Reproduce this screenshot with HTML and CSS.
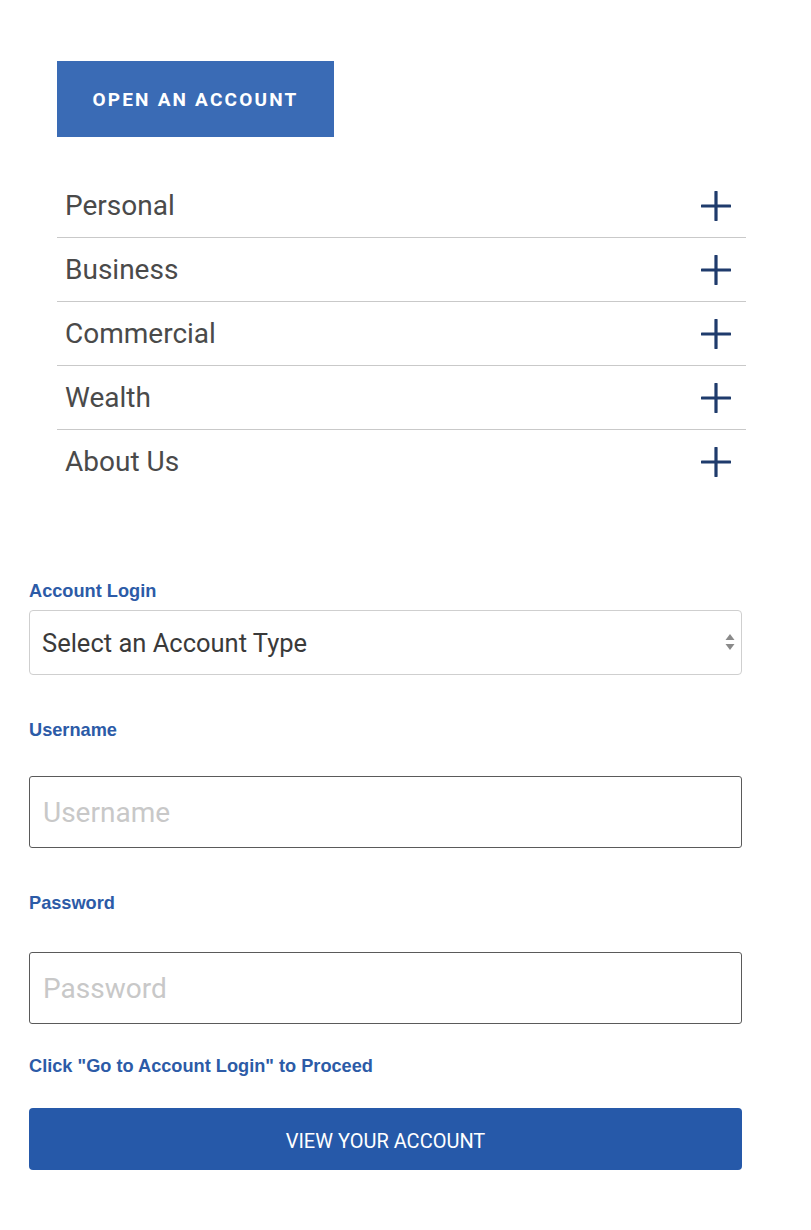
FILE: index.html
```html
<!DOCTYPE html>
<html lang="en">
<head>
<meta charset="utf-8">
<title>Account</title>
<link rel="stylesheet" href="styles.css">
</head>
<body>
<div class="page">
  <a class="open-btn" href="#">OPEN AN ACCOUNT</a>

  <ul class="nav">
    <li class="nav-item"><span>Personal</span><svg class="plus" viewBox="0 0 30 30"><path d="M15 1V29M1 15H29"/></svg></li>
    <li class="nav-item"><span>Business</span><svg class="plus" viewBox="0 0 30 30"><path d="M15 1V29M1 15H29"/></svg></li>
    <li class="nav-item"><span>Commercial</span><svg class="plus" viewBox="0 0 30 30"><path d="M15 1V29M1 15H29"/></svg></li>
    <li class="nav-item"><span>Wealth</span><svg class="plus" viewBox="0 0 30 30"><path d="M15 1V29M1 15H29"/></svg></li>
    <li class="nav-item"><span>About Us</span><svg class="plus" viewBox="0 0 30 30"><path d="M15 1V29M1 15H29"/></svg></li>
  </ul>

  <form class="login">
    <label class="lbl lbl-account">Account Login</label>
    <div class="select-wrap">
      <select class="select">
        <option>Select an Account Type</option>
      </select>
      <svg class="arrows" viewBox="0 0 10 20"><path d="M5 2L9.5 8H0.5Z"/><path d="M5 18L9.5 12H0.5Z"/></svg>
    </div>

    <label class="lbl lbl-user">Username</label>
    <input class="field field-user" type="text" placeholder="Username">

    <label class="lbl lbl-pass">Password</label>
    <input class="field field-pass" type="password" placeholder="Password">

    <p class="lbl lbl-click">Click "Go to Account Login" to Proceed</p>
    <button class="view-btn" type="button">VIEW YOUR ACCOUNT</button>
  </form>
</div>
</body>
</html>
```
FILE: styles.css
```css
* { box-sizing: border-box; }
html, body { margin: 0; padding: 0; background: #fff; }
body { font-family: Roboto, "Liberation Sans", Arial, sans-serif; }

.page { padding-top: 61px; }

.open-btn {
  display: flex;
  align-items: center;
  justify-content: center;
  margin-left: 57px;
  width: 277px;
  height: 76px;
  background: #3a6bb5;
  color: #fff;
  font-weight: 700;
  font-size: 19px;
  letter-spacing: 2.2px;
  text-decoration: none;
}

.nav {
  list-style: none;
  margin: 37px 0 0 57px;
  padding: 0;
  width: 689px;
}
.nav-item {
  display: flex;
  align-items: center;
  justify-content: space-between;
  height: 64px;
  padding: 0 15px 0 8px;
  border-bottom: 1px solid #c9c9c9;
  font-size: 28px;
  color: #4a4a4a;
}
.nav-item:last-child { border-bottom: none; height: 63px; }
.plus {
  width: 30px;
  height: 30px;
  fill: none;
  stroke: #1f3b6c;
  stroke-width: 3.2;
  stroke-linecap: round;
}

.login {
  margin: 86px 0 0 29px;
  width: 713px;
  display: flex;
  flex-direction: column;
}
.lbl {
  display: block;
  margin: 0;
  font-family: "Liberation Sans", Arial, sans-serif;
  font-size: 18.2px;
  line-height: 24px;
  font-weight: 700;
  color: #2c5ba7;
}
.select-wrap {
  position: relative;
  margin-top: 7px;
}
.select {
  appearance: none;
  -webkit-appearance: none;
  display: block;
  width: 100%;
  height: 65px;
  padding: 0 0 0 12px;
  border: 1px solid #cfcfcf;
  border-radius: 4px;
  background: #fff;
  font-family: Roboto, "Liberation Sans", Arial, sans-serif;
  font-size: 25.5px;
  color: #3a3a3a;
}
.arrows {
  position: absolute;
  right: 7px;
  top: 22px;
  width: 10px;
  height: 20px;
  fill: #8a8a8a;
}
.lbl-user { margin-top: 43px; }
.lbl-pass { margin-top: 43px; }
.field {
  display: block;
  width: 100%;
  height: 72px;
  padding: 0 0 0 13px;
  border: 1px solid #5a5a5a;
  border-radius: 3px;
  background: #fff;
  font-family: Roboto, "Liberation Sans", Arial, sans-serif;
  font-size: 28px;
  color: #333;
}
.field::placeholder { color: #c8c8c8; }
.field-user { margin-top: 34px; }
.field-pass { margin-top: 37px; }
.lbl-click { margin-top: 30px; }
.view-btn {
  margin-top: 30px;
  height: 62px;
  width: 100%;
  border: none;
  border-radius: 4px;
  background: #2659a9;
  color: #fff;
  font-family: Roboto, "Liberation Sans", Arial, sans-serif;
  font-size: 20px;
  padding-top: 4px;
}
```
